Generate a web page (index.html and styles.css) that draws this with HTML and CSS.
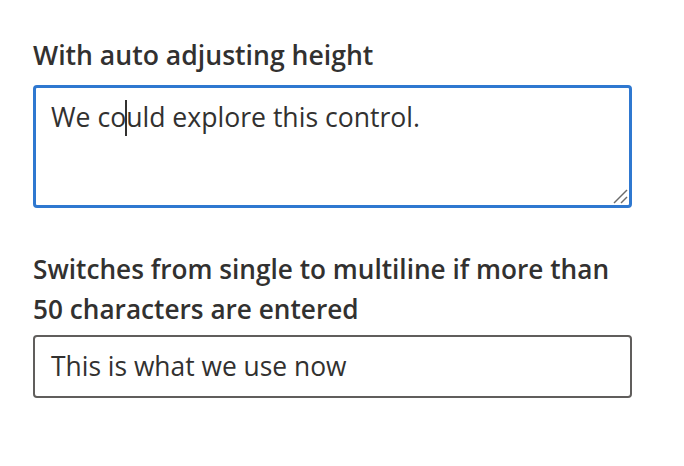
FILE: index.html
```html
<!DOCTYPE html>
<html lang="en">
<head>
  <meta charset="UTF-8">
  <meta name="viewport" content="width=device-width, initial-scale=1.0">
  <title>Text fields</title>
  <link rel="stylesheet" href="styles.css">
</head>
<body>
  <div class="container">
    <div class="field">
      <label class="field-label">With auto adjusting height</label>
      <div class="textarea focused">
        <span>We co</span><span class="caret"></span><span>uld explore this control.</span>
        <svg class="grip" width="16" height="16" viewBox="0 0 16 16">
          <line x1="2" y1="15" x2="15" y2="2" stroke="#6b6b6b" stroke-width="1.5"/>
          <line x1="9" y1="15" x2="15" y2="9" stroke="#6b6b6b" stroke-width="1.5"/>
        </svg>
      </div>
    </div>
    <div class="field second">
      <label class="field-label">Switches from single to multiline if more than 50 characters are entered</label>
      <div class="input">This is what we use now</div>
    </div>
  </div>
</body>
</html>
```

FILE: styles.css
```css
body {
  margin: 0;
  padding: 0;
  background: #ffffff;
  font-family: "Open Sans", "Noto Sans", Arial, sans-serif;
  color: #323130;
}
.container {
  width: 599px;
  padding: 25px 0 0 33px;
}
.field-label {
  display: block;
  font-size: 26.6px;
  font-weight: 600;
  line-height: 40px;
  padding: 10px 0;
}
.second {
  margin-top: 36px;
}
.second .field-label {
  padding: 5px 0 6px;
  font-size: 26.2px;
}
.textarea {
  position: relative;
  box-sizing: border-box;
  height: 123px;
  border: 3px solid #2f78d0;
  border-radius: 4px;
  padding: 9px 15px;
  font-size: 26.6px;
  line-height: 40px;
}
.caret {
  display: inline-block;
  width: 2px;
  height: 36px;
  background: #323130;
  vertical-align: -9px;
  margin: 0 -1px;
}
.grip {
  position: absolute;
  right: 1px;
  bottom: 1px;
}
.input {
  box-sizing: border-box;
  height: 63px;
  border: 2px solid #605e5c;
  border-radius: 4px;
  padding: 0 16px;
  font-size: 26.4px;
  line-height: 59px;
}
```
